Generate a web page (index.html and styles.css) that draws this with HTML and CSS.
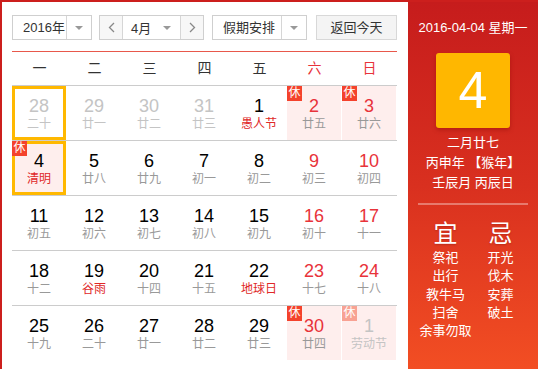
FILE: index.html
```html
<!DOCTYPE html>
<html lang="zh-CN">
<head>
<meta charset="utf-8">
<link rel="stylesheet" href="styles.css">
</head>
<body>
<div class="cal">
  <div class="main">
    <div class="controls">
      <div class="sel sel-year"><span class="sel-text">2016年</span><span class="sel-arrow"><i class="tri"></i></span></div>
      <div class="month-group">
        <span class="nav"><svg width="7" height="11" viewBox="0 0 7 11"><path d="M6 1 L1.5 5.5 L6 10" fill="none" stroke="#888" stroke-width="1.3"/></svg></span>
        <span class="month"><span class="month-text">4月</span><i class="tri"></i></span>
        <span class="nav"><svg width="7" height="11" viewBox="0 0 7 11"><path d="M1 1 L5.5 5.5 L1 10" fill="none" stroke="#888" stroke-width="1.3"/></svg></span>
      </div>
      <div class="sel sel-holiday"><span class="sel-text">假期安排</span><span class="sel-arrow"><i class="tri"></i></span></div>
      <div class="btn-today">返回今天</div>
    </div>
    <div class="week">
      <span>一</span><span>二</span><span>三</span><span>四</span><span>五</span><span class="we">六</span><span class="we">日</span>
    </div>
    <div class="grid">
      <div class="row">
        <div class="c other sel-cell"><b>28</b><em>二十</em></div>
        <div class="c other"><b>29</b><em>廿一</em></div>
        <div class="c other"><b>30</b><em>廿二</em></div>
        <div class="c other"><b>31</b><em>廿三</em></div>
        <div class="c"><b>1</b><em class="fest">愚人节</em></div>
        <div class="c hol wkd"><i class="rest">休</i><b>2</b><em>廿五</em></div>
        <div class="c hol wkd"><i class="rest">休</i><b>3</b><em>廿六</em></div>
      </div>
      <div class="row">
        <div class="c hol sel-cell"><i class="rest">休</i><b>4</b><em class="fest">清明</em></div>
        <div class="c"><b>5</b><em>廿八</em></div>
        <div class="c"><b>6</b><em>廿九</em></div>
        <div class="c"><b>7</b><em>初一</em></div>
        <div class="c"><b>8</b><em>初二</em></div>
        <div class="c wkd"><b>9</b><em>初三</em></div>
        <div class="c wkd"><b>10</b><em>初四</em></div>
      </div>
      <div class="row">
        <div class="c"><b>11</b><em>初五</em></div>
        <div class="c"><b>12</b><em>初六</em></div>
        <div class="c"><b>13</b><em>初七</em></div>
        <div class="c"><b>14</b><em>初八</em></div>
        <div class="c"><b>15</b><em>初九</em></div>
        <div class="c wkd"><b>16</b><em>初十</em></div>
        <div class="c wkd"><b>17</b><em>十一</em></div>
      </div>
      <div class="row">
        <div class="c"><b>18</b><em>十二</em></div>
        <div class="c"><b>19</b><em class="fest">谷雨</em></div>
        <div class="c"><b>20</b><em>十四</em></div>
        <div class="c"><b>21</b><em>十五</em></div>
        <div class="c"><b>22</b><em class="fest">地球日</em></div>
        <div class="c wkd"><b>23</b><em>十七</em></div>
        <div class="c wkd"><b>24</b><em>十八</em></div>
      </div>
      <div class="row last">
        <div class="c"><b>25</b><em>十九</em></div>
        <div class="c"><b>26</b><em>二十</em></div>
        <div class="c"><b>27</b><em>廿一</em></div>
        <div class="c"><b>28</b><em>廿二</em></div>
        <div class="c"><b>29</b><em>廿三</em></div>
        <div class="c hol wkd"><i class="rest">休</i><b>30</b><em>廿四</em></div>
        <div class="c hol other"><i class="rest faded">休</i><b>1</b><em>劳动节</em></div>
      </div>
    </div>
  </div>
  <div class="side">
    <div class="side-date">2016-04-04 星期一</div>
    <div class="big-day">4</div>
    <div class="lunar">二月廿七</div>
    <div class="lunar">丙申年 【猴年】</div>
    <div class="lunar">壬辰月 丙辰日</div>
    <div class="divider"></div>
    <div class="yiji">
      <div class="col">
        <div class="yj-title">宜</div>
        <div>祭祀</div>
        <div>出行</div>
        <div>教牛马</div>
        <div>扫舍</div>
        <div>余事勿取</div>
      </div>
      <div class="col">
        <div class="yj-title">忌</div>
        <div>开光</div>
        <div>伐木</div>
        <div>安葬</div>
        <div>破土</div>
      </div>
    </div>
  </div>
</div>
</body>
</html>
```

FILE: styles.css
```css
* { box-sizing: border-box; margin: 0; padding: 0; }
html, body { background: #fff; }
body {
  font-family: "Liberation Sans", Arial, "Noto Sans CJK SC", sans-serif;
  color: #333;
}
.cal {
  display: flex;
  width: 538px;
  height: 369px;
  border-top: 2px solid #cc1f1d;
  border-left: 2px solid #cc1f1d;
  overflow: hidden;
}
.main {
  width: 406px;
  flex: none;
  padding: 13px 11px 0 10px;
}
.controls {
  display: flex;
  height: 25px;
  margin-bottom: 11px;
  font-size: 13px;
}
.sel {
  display: flex;
  height: 25px;
  border: 1px solid #cfcfcf;
  background: #fff;
}
.sel-text {
  line-height: 23px;
  padding-left: 10px;
  color: #333;
}
.sel-arrow {
  width: 25px;
  border-left: 1px solid #d6d6d6;
  display: flex;
  align-items: center;
  justify-content: center;
}
.tri {
  display: block;
  width: 0;
  height: 0;
  border-left: 4px solid transparent;
  border-right: 4px solid transparent;
  border-top: 4px solid #999;
}
.sel-year { width: 80px; }
.sel-year .sel-text { width: 54px; }
.month-group {
  display: flex;
  height: 25px;
  margin-left: 7px;
  border: 1px solid #cfcfcf;
}
.nav {
  width: 22px;
  display: flex;
  align-items: center;
  justify-content: center;
  background: #f7f7f7;
}
.month {
  width: 59px;
  border-left: 1px solid #d6d6d6;
  border-right: 1px solid #d6d6d6;
  display: flex;
  align-items: center;
  justify-content: space-between;
  padding: 0 9px 0 8px;
}
.sel-holiday { width: 95px; margin-left: 8px; }
.sel-holiday .sel-text { width: 69px; padding-left: 10px; }
.btn-today {
  width: 82px;
  height: 25px;
  margin-left: 9px;
  border: 1px solid #d8d8d8;
  background: #f4f4f4;
  text-align: center;
  line-height: 23px;
  color: #333;
}
.week {
  display: grid;
  grid-template-columns: repeat(7, 55px);
  border-top: 1px solid #e8584b;
  border-bottom: 1px solid #ccc;
  height: 35px;
  line-height: 33px;
  text-align: center;
  font-size: 14px;
  color: #333;
}
.week .we { color: #e8333a; }
.row {
  display: grid;
  grid-template-columns: repeat(7, 55px);
  border-bottom: 1px solid #ccc;
}
.row.last { border-bottom: none; }
.c {
  position: relative;
  height: 54px;
  margin-right: 1px;
  padding-top: 10px;
  text-align: center;
}
.c b {
  display: block;
  font-weight: normal;
  font-size: 18px;
  line-height: 20px;
  color: #000;
}
.c em {
  display: block;
  font-style: normal;
  font-size: 12px;
  line-height: 16px;
  color: #999;
}
.c em.fest { color: #e02828; }
.c.wkd b { color: #e8333a; }
.c.hol { background: #feeeed; }
.c.other b, .c.other em { color: #c4c4c4; }
.sel-cell { box-shadow: inset 0 0 0 3px #ffb800; }
.rest {
  position: absolute;
  left: 0;
  top: 0;
  width: 15px;
  height: 15px;
  background: #f4422c;
  color: #fff;
  font-style: normal;
  font-size: 12px;
  line-height: 15px;
  text-align: center;
}
.rest.faded { background: #f8a293; }
.side {
  width: 130px;
  flex: none;
  background: linear-gradient(to bottom, #c61c1c 0%, #d9301f 50%, #f24e23 100%);
  color: #fff;
  padding-top: 16px;
  text-align: center;
}
.side-date {
  font-size: 13px;
  line-height: 20px;
}
.big-day {
  width: 74px;
  height: 75px;
  margin: 15px auto 5px;
  background: #ffb700;
  border-radius: 3px;
  box-shadow: 0 2px 4px rgba(120, 0, 0, 0.35);
  font-size: 52px;
  line-height: 75px;
  color: #fff;
}
.lunar {
  font-size: 13px;
  line-height: 20px;
}
.divider {
  height: 2px;
  margin: 10px 10px 0;
  background: rgba(255, 255, 255, 0.35);
}
.yiji {
  display: flex;
  margin: 15px 10px 0;
}
.col {
  width: 55px;
  font-size: 13px;
  line-height: 18.3px;
  white-space: nowrap;
}
.yj-title {
  font-size: 24px;
  line-height: 28px;
  margin-bottom: 1px;
  text-shadow: 0 1px 2px rgba(100, 0, 0, 0.3);
}
```
